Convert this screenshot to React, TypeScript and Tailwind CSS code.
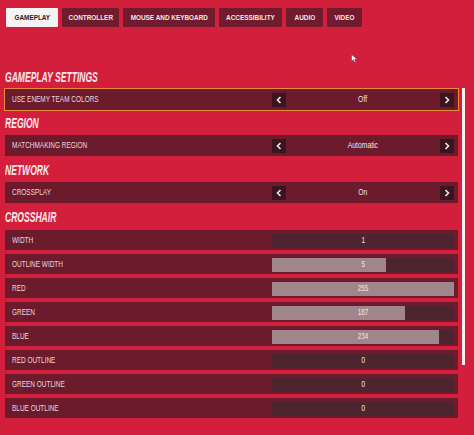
import React from "react";

const FONT = { fontFamily: "'Liberation Sans', Arial, sans-serif" };

const tabs = [
  { label: "GAMEPLAY", w: "w-[52px]", active: true },
  { label: "CONTROLLER", w: "w-[57px]" },
  { label: "MOUSE AND KEYBOARD", w: "w-[92px]" },
  { label: "ACCESSIBILITY", w: "w-[63px]" },
  { label: "AUDIO", w: "w-[37px]" },
  { label: "VIDEO", w: "w-[35px]" },
];

function Heading({ text, h }: { text: string; h: string }) {
  return (
    <div className={`${h} flex items-center`}>
      <span className="inline-block origin-left scale-x-[0.57] whitespace-nowrap text-[15px] font-bold italic leading-none text-[#fbe9ec]">
        {text}
      </span>
    </div>
  );
}

function Label({ text }: { text: string }) {
  return (
    <span className="inline-block origin-left scale-x-[0.76] whitespace-nowrap text-[8.5px] leading-none text-[#ecd6db]">
      {text}
    </span>
  );
}

function Chevron({ dir }: { dir: "l" | "r" }) {
  return (
    <div className="flex h-[14px] w-[14px] items-center justify-center bg-[#3a1520]">
      <svg width="6" height="8" viewBox="0 0 6 8">
        <path
          d={dir === "l" ? "M4.5 1 L1.5 4 L4.5 7" : "M1.5 1 L4.5 4 L1.5 7"}
          fill="none"
          stroke="#f2e6e8"
          strokeWidth="1.6"
        />
      </svg>
    </div>
  );
}

function SelectRow({ label, value, selected }: { label: string; value: string; selected?: boolean }) {
  return (
    <div
      className={`flex h-[21px] items-center justify-between bg-[#6c1b2d] pl-[7px] pr-[4px] ${
        selected ? "outline outline-1 outline-[#ec8a3c]" : ""
      }`}
    >
      <Label text={label} />
      <div className="flex w-[182px] items-center">
        <Chevron dir="l" />
        <div className="flex flex-1 justify-center">
          <span className="inline-block scale-x-[0.8] whitespace-nowrap text-[8.5px] leading-none text-[#f3e4e7]">
            {value}
          </span>
        </div>
        <Chevron dir="r" />
      </div>
    </div>
  );
}

function SliderRow({ label, value, pct }: { label: string; value: string; pct: number }) {
  return (
    <div className="flex h-[20px] items-center justify-between bg-[#6c1b2d] pl-[7px] pr-[4px]">
      <Label text={label} />
      <div className="relative mt-[1px] flex h-[14px] w-[182px] items-center justify-center bg-[#4c2531]">
        <div className="absolute left-0 top-0 h-full bg-[#a1858c]" style={{ width: `${pct}%` }} />
        <span className="relative inline-block scale-x-[0.75] whitespace-nowrap text-[8.5px] leading-none text-[#f3e4e7]">
          {value}
        </span>
      </div>
    </div>
  );
}

export default function App() {
  return (
    <div className="relative h-[435px] w-[474px] overflow-hidden bg-[#d31f3c]" style={FONT}>
      {/* tabs */}
      <div className="flex gap-[4px] pl-[6px] pt-[8px]">
        {tabs.map((t) => (
          <div
            key={t.label}
            className={`flex h-[19px] ${t.w} items-center justify-center rounded-[1px] ${
              t.active ? "bg-[#f6f3f4] text-[#2a1a1f]" : "bg-[#701c2e] text-[#f4e6e9]"
            }`}
          >
            <span className="inline-block scale-x-[0.8] whitespace-nowrap text-[8px] font-bold leading-none">
              {t.label}
            </span>
          </div>
        ))}
      </div>

      {/* cursor */}
      <svg className="absolute left-[351px] top-[54px]" width="7" height="9" viewBox="0 0 7 9">
        <path d="M0.5 0.5 L0.5 7.5 L2.3 5.8 L3.6 8.5 L4.8 7.9 L3.6 5.3 L6.2 5.3 Z" fill="#ffffff" stroke="#7a1a2a" strokeWidth="0.5" />
      </svg>

      <div className="mt-[36px] flex">
        <div className="ml-[5px] flex w-[453px] flex-col">
          <Heading text="GAMEPLAY SETTINGS" h="h-[26px]" />
          <SelectRow label="USE ENEMY TEAM COLORS" value="Off" selected />
          <Heading text="REGION" h="h-[25px]" />
          <SelectRow label="MATCHMAKING REGION" value="Automatic" />
          <Heading text="NETWORK" h="h-[26px]" />
          <SelectRow label="CROSSPLAY" value="On" />
          <Heading text="CROSSHAIR" h="h-[27px]" />
          <div className="flex flex-col gap-[4px]">
            <SliderRow label="WIDTH" value="1" pct={0} />
            <SliderRow label="OUTLINE WIDTH" value="5" pct={62.6} />
            <SliderRow label="RED" value="255" pct={100} />
            <SliderRow label="GREEN" value="187" pct={73.3} />
            <SliderRow label="BLUE" value="234" pct={91.8} />
            <SliderRow label="RED OUTLINE" value="0" pct={0} />
            <SliderRow label="GREEN OUTLINE" value="0" pct={0} />
            <SliderRow label="BLUE OUTLINE" value="0" pct={0} />
          </div>
        </div>
        <div className="ml-[4px] mt-[25px] h-[277px] w-[3px] bg-[#f7eef0]" />
      </div>
    </div>
  );
}
